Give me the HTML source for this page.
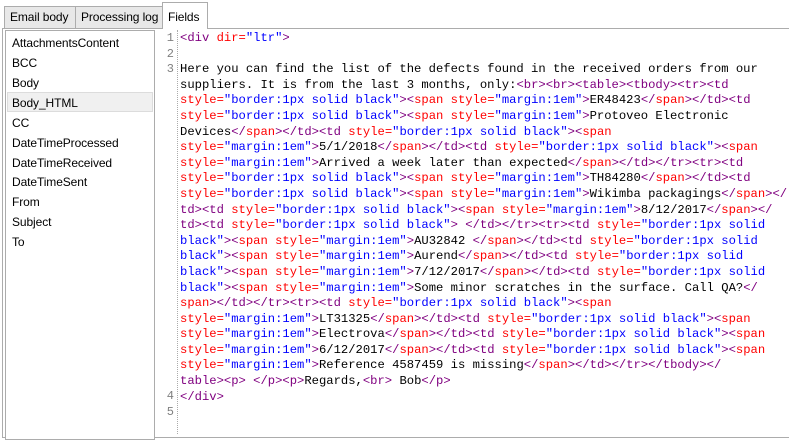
<!DOCTYPE html>
<html><head><meta charset="utf-8"><style>
*{margin:0;padding:0;box-sizing:border-box}
body{width:789px;height:434px;overflow:hidden;background:#fff;position:relative;font-family:"Liberation Sans",sans-serif}
.tab{position:absolute;top:6px;height:23px;border:1px solid #acacac;background:#e8e8e8;font-size:12px;line-height:21px;padding-left:5px;color:#000;white-space:nowrap;overflow:hidden;letter-spacing:-0.1px}
.frame{position:absolute;left:2px;top:28px;width:790px;height:410px;border:1px solid #acacac;background:#fff}
.list{position:absolute;left:5px;top:30px;width:150px;height:410px;border:1px solid #acacac;background:#fff}
.it{position:absolute;left:12px;font-size:12px;color:#000;line-height:16px;letter-spacing:-0.1px}
.sel{position:absolute;left:7px;top:92px;width:146px;height:20px;background:#f0f0f0;border:1px solid #dcdcdc}
pre{position:absolute;font-family:"Liberation Mono",monospace;font-size:12.2px;line-height:15.6px;white-space:pre}
.code{left:180px;top:31px;color:#000}
.n{position:absolute;left:160px;width:14px;text-align:right;color:#808080;font-family:"Liberation Mono",monospace;font-size:12px;line-height:15.6px}
.dots{position:absolute;left:177px;top:30px;height:404px;border-left:1px dotted #aaa}
i{font-style:normal;color:#800080}
em{font-style:normal;color:#f00}
s{text-decoration:none;color:#00f}
</style></head><body>
<div class="frame"></div>
<div class="tab" style="left:4px;width:72px">Email body</div>
<div class="tab" style="left:75px;width:88px">Processing log</div>
<div class="tab" style="left:162px;top:2px;height:27px;width:46px;background:#fff;border-bottom:none;line-height:28px">Fields</div>
<div class="list"></div>
<div class="sel"></div>
<div class="it" style="top:35px">AttachmentsContent</div>
<div class="it" style="top:55px">BCC</div>
<div class="it" style="top:75px">Body</div>
<div class="it" style="top:95px">Body_HTML</div>
<div class="it" style="top:115px">CC</div>
<div class="it" style="top:135px">DateTimeProcessed</div>
<div class="it" style="top:155px">DateTimeReceived</div>
<div class="it" style="top:174px">DateTimeSent</div>
<div class="it" style="top:194px">From</div>
<div class="it" style="top:214px">Subject</div>
<div class="it" style="top:234px">To</div>
<div class="dots"></div>
<div class="n" style="top:31px">1</div>
<div class="n" style="top:46.6px">2</div>
<div class="n" style="top:62.2px">3</div>
<div class="n" style="top:389px">4</div>
<div class="n" style="top:405px">5</div>
<pre class="code"><i>&lt;div </i><em>dir=</em><s>"ltr"</s><i>&gt;</i>

Here you can find the list of the defects found in the received orders from our
suppliers. It is from the last 3 months, only:<i>&lt;br&gt;&lt;br&gt;&lt;table&gt;&lt;tbody&gt;&lt;tr&gt;&lt;td</i>
<em>style=</em><s>"border:1px solid black"</s><i>&gt;&lt;</i><em>span style=</em><s>"margin:1em"</s><i>&gt;</i>ER48423<i>&lt;/</i><em>span</em><i>&gt;&lt;/td&gt;&lt;td</i>
<em>style=</em><s>"border:1px solid black"</s><i>&gt;&lt;</i><em>span style=</em><s>"margin:1em"</s><i>&gt;</i>Protoveo Electronic
Devices<i>&lt;/</i><em>span</em><i>&gt;&lt;/td&gt;&lt;td </i><em>style=</em><s>"border:1px solid black"</s><i>&gt;&lt;</i><em>span</em>
<em>style=</em><s>"margin:1em"</s><i>&gt;</i>5/1/2018<i>&lt;/</i><em>span</em><i>&gt;&lt;/td&gt;&lt;td </i><em>style=</em><s>"border:1px solid black"</s><i>&gt;&lt;</i><em>span</em>
<em>style=</em><s>"margin:1em"</s><i>&gt;</i>Arrived a week later than expected<i>&lt;/</i><em>span</em><i>&gt;&lt;/td&gt;&lt;/tr&gt;&lt;tr&gt;&lt;td</i>
<em>style=</em><s>"border:1px solid black"</s><i>&gt;&lt;</i><em>span style=</em><s>"margin:1em"</s><i>&gt;</i>TH84280<i>&lt;/</i><em>span</em><i>&gt;&lt;/td&gt;&lt;td</i>
<em>style=</em><s>"border:1px solid black"</s><i>&gt;&lt;</i><em>span style=</em><s>"margin:1em"</s><i>&gt;</i>Wikimba packagings<i>&lt;/</i><em>span</em><i>&gt;&lt;/</i>
<i>td&gt;&lt;td </i><em>style=</em><s>"border:1px solid black"</s><i>&gt;&lt;</i><em>span style=</em><s>"margin:1em"</s><i>&gt;</i>8/12/2017<i>&lt;/</i><em>span</em><i>&gt;&lt;/</i>
<i>td&gt;&lt;td </i><em>style=</em><s>"border:1px solid black"</s><i>&gt;</i> <i>&lt;/td&gt;&lt;/tr&gt;&lt;tr&gt;&lt;td </i><em>style=</em><s>"border:1px solid</s>
<s>black"</s><i>&gt;&lt;</i><em>span style=</em><s>"margin:1em"</s><i>&gt;</i>AU32842 <i>&lt;/</i><em>span</em><i>&gt;&lt;/td&gt;&lt;td </i><em>style=</em><s>"border:1px solid</s>
<s>black"</s><i>&gt;&lt;</i><em>span style=</em><s>"margin:1em"</s><i>&gt;</i>Aurend<i>&lt;/</i><em>span</em><i>&gt;&lt;/td&gt;&lt;td </i><em>style=</em><s>"border:1px solid</s>
<s>black"</s><i>&gt;&lt;</i><em>span style=</em><s>"margin:1em"</s><i>&gt;</i>7/12/2017<i>&lt;/</i><em>span</em><i>&gt;&lt;/td&gt;&lt;td </i><em>style=</em><s>"border:1px solid</s>
<s>black"</s><i>&gt;&lt;</i><em>span style=</em><s>"margin:1em"</s><i>&gt;</i>Some minor scratches in the surface. Call QA?<i>&lt;/</i>
<em>span</em><i>&gt;&lt;/td&gt;&lt;/tr&gt;&lt;tr&gt;&lt;td </i><em>style=</em><s>"border:1px solid black"</s><i>&gt;&lt;</i><em>span</em>
<em>style=</em><s>"margin:1em"</s><i>&gt;</i>LT31325<i>&lt;/</i><em>span</em><i>&gt;&lt;/td&gt;&lt;td </i><em>style=</em><s>"border:1px solid black"</s><i>&gt;&lt;</i><em>span</em>
<em>style=</em><s>"margin:1em"</s><i>&gt;</i>Electrova<i>&lt;/</i><em>span</em><i>&gt;&lt;/td&gt;&lt;td </i><em>style=</em><s>"border:1px solid black"</s><i>&gt;&lt;</i><em>span</em>
<em>style=</em><s>"margin:1em"</s><i>&gt;</i>6/12/2017<i>&lt;/</i><em>span</em><i>&gt;&lt;/td&gt;&lt;td </i><em>style=</em><s>"border:1px solid black"</s><i>&gt;&lt;</i><em>span</em>
<em>style=</em><s>"margin:1em"</s><i>&gt;</i>Reference 4587459 is missing<i>&lt;/</i><em>span</em><i>&gt;&lt;/td&gt;&lt;/tr&gt;&lt;/tbody&gt;&lt;/</i>
<i>table&gt;&lt;p&gt; &lt;/p&gt;&lt;p&gt;</i>Regards,<i>&lt;br&gt;</i> Bob<i>&lt;/p&gt;</i>
<i>&lt;/div&gt;</i>
</pre>
</body></html>
